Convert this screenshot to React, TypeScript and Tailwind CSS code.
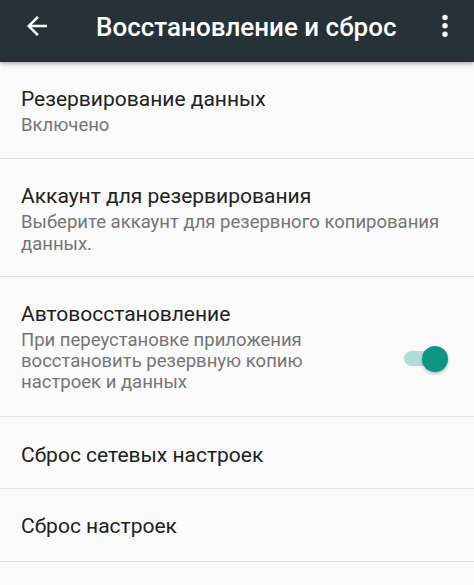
function BackArrow() {
  return (
    <svg viewBox="0 0 24 24" className="h-[30px] w-[30px]" fill="white">
      <path d="M20 11H7.83l5.59-5.59L12 4l-8 8 8 8 1.41-1.41L7.83 13H20v-2z" />
    </svg>
  )
}

function MoreVert() {
  return (
    <svg viewBox="0 0 10 26" className="h-[26px] w-[10px]" fill="white">
      <circle cx="5" cy="4.5" r="2.7" />
      <circle cx="5" cy="12.8" r="2.7" />
      <circle cx="5" cy="21.2" r="2.7" />
    </svg>
  )
}

function Toggle() {
  return (
    <div className="relative h-[26px] w-[44px]">
      <div className="absolute left-0 top-[5px] h-[15px] w-[38px] rounded-full bg-[#b0ddd6]" />
      <div className="absolute right-0 top-0 h-[26px] w-[26px] rounded-full bg-[#109483] shadow-[0_2px_3px_rgba(0,0,0,0.25)]" />
    </div>
  )
}

function Row({ title, subtitle, className }: { title: string; subtitle?: React.ReactNode; className: string }) {
  return (
    <div className={`border-b border-[#e2e2e2] pl-[21px] pr-4 ${className}`}>
      <div className="text-[21px] leading-[26px] text-[#212121]">{title}</div>
      {subtitle && <div className="mt-[2px] text-[18.5px] leading-[22px] text-[#757575]">{subtitle}</div>}
    </div>
  )
}

export default function App() {
  return (
    <div className="h-[585px] w-[474px] overflow-hidden bg-[#fafafa] font-['Roboto',sans-serif]">
      <header className="relative z-10 flex h-[62px] items-start bg-[#263238] shadow-[0_2px_4px_rgba(0,0,0,0.3)]">
        <div className="ml-[22px] mt-[11px]">
          <BackArrow />
        </div>
        <h1 className="ml-[44px] mt-[12px] text-[26px] font-medium leading-[30px] text-white">Восстановление и сброс</h1>
        <div className="ml-auto mr-[24px] mt-[13px]">
          <MoreVert />
        </div>
      </header>

      <Row className="h-[97px] pt-[24px]" title="Резервирование данных" subtitle="Включено" />
      <Row
        className="h-[118px] pt-[24px]"
        title="Аккаунт для резервирования"
        subtitle="Выберите аккаунт для резервного копирования данных."
      />
      <div className="flex h-[140px] items-start border-b border-[#e2e2e2] pl-[21px] pr-[26px] pt-[24px]">
        <div className="flex-1">
          <div className="text-[21px] leading-[26px] text-[#212121]">Автовосстановление</div>
          <div className="mt-[3px] text-[18.5px] leading-[21px] text-[#757575]">
            При переустановке приложения
            <br />
            восстановить резервную копию
            <br />
            настроек и данных
          </div>
        </div>
        <div className="mt-[45px]">
          <Toggle />
        </div>
      </div>
      <Row className="h-[72px] pt-[25px]" title="Сброс сетевых настроек" />
      <Row className="h-[73px] pt-[24px]" title="Сброс настроек" />
      <div className="h-[40px]" />
    </div>
  )
}
